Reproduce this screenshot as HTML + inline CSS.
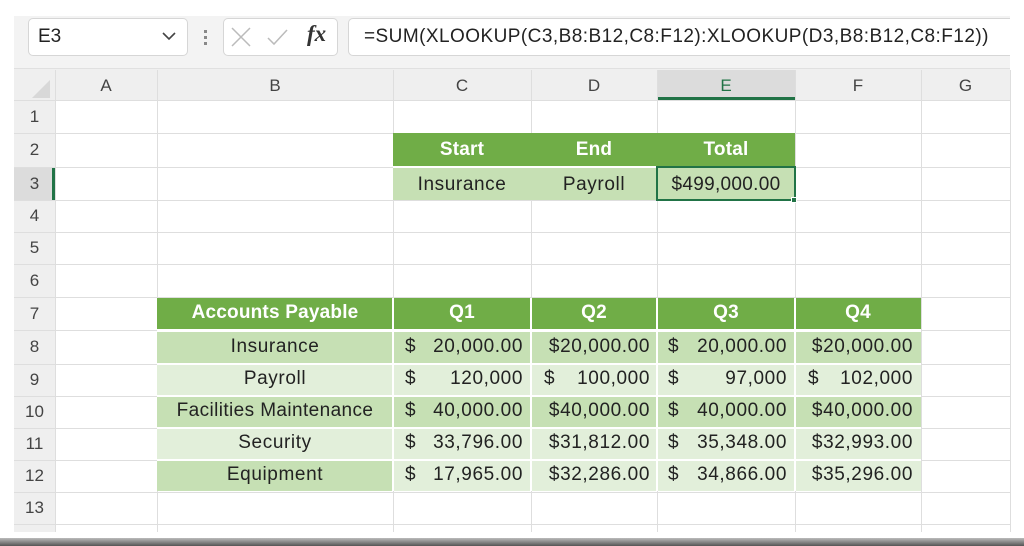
<!DOCTYPE html>
<html><head><meta charset="utf-8"><style>
*{margin:0;padding:0;box-sizing:border-box}
body{width:1024px;height:546px;background:#fff;position:relative;overflow:hidden;font-family:"Liberation Sans",sans-serif}
.a{position:absolute}
.panel{left:14px;top:16px;width:996px;height:516px;background:#f3f3f3}
.box{background:#fff;border:1px solid #d6d6d6;border-radius:5px;height:38px;top:18px}
.hl{position:absolute;background:#dedede}
.ch{top:72px;height:28px;font-size:17px;color:#444;text-align:center;line-height:28px}
.rh{left:14px;width:41px;font-size:17px;color:#444;text-align:center}
.c{position:absolute;font-size:19px;letter-spacing:0.6px;color:#222;text-align:center;white-space:pre}
.g{background:#70ad47;color:#fff;font-weight:bold;letter-spacing:0.2px}
.d{background:#c6e0b4}
.l{background:#e2efda}
.w{position:absolute;background:#fff}
.n{position:absolute;font-size:19px;letter-spacing:0.6px;color:#222;white-space:pre}
</style></head><body>
<div class="a panel"></div>
<div class="a box" style="left:28px;width:160px"></div>
<div class="a" style="left:38px;top:26px;font-size:19px;color:#222">E3</div>
<svg class="a" style="left:162px;top:31px" width="14" height="10"><path d="M1 2 L7 8 L13 2" stroke="#444" stroke-width="1.6" fill="none"/></svg>
<div class="a" style="left:204px;top:30px;width:3px;height:3px;background:#888;box-shadow:0 6px #888,0 12px #888"></div>
<div class="a box" style="left:223px;width:115px"></div>
<svg class="a" style="left:230px;top:26px" width="70" height="24"><path d="M2 2 L20 20 M20 2 L2 20" stroke="#bbb" stroke-width="1.5"/><path d="M38 12 L44 18 L57 4" stroke="#bbb" stroke-width="1.5" fill="none"/></svg>
<div class="a" style="left:307px;top:21px;font-family:'Liberation Serif',serif;font-style:italic;font-weight:bold;font-size:23px;color:#333">fx</div>
<div class="a box" style="left:348px;width:662px;border-right:none;border-radius:5px 0 0 5px"></div>
<div class="a" style="left:364px;top:26px;font-size:19px;color:#222;letter-spacing:0.45px">=SUM(XLOOKUP(C3,B8:B12,C8:F12):XLOOKUP(D3,B8:B12,C8:F12))</div>
<div class="a" style="left:14px;top:68px;width:996px;height:32px;background:#efefef;border-top:1px solid #e0e0e0"></div>
<div class="a" style="left:14px;top:100px;width:41px;height:432px;background:#efefef"></div>
<div class="a" style="left:55px;top:100px;width:955px;height:432px;background:#fff"></div>
<svg class="a" style="left:32px;top:80px" width="18" height="18"><path d="M18 0 L18 18 L0 18 Z" fill="#d8d8d8"/></svg>
<div class="a" style="left:657px;top:70px;width:138px;height:30px;background:#dcdcdc;border-bottom:3px solid #217346"></div>
<div class="a" style="left:14px;top:167px;width:41px;height:33px;background:#dcdcdc;border-right:3px solid #217346"></div>
<div class="a ch" style="left:55px;width:102px">A</div>
<div class="a ch" style="left:157px;width:236px">B</div>
<div class="a ch" style="left:393px;width:138px">C</div>
<div class="a ch" style="left:531px;width:126px">D</div>
<div class="a ch" style="left:657px;width:138px;color:#217346">E</div>
<div class="a ch" style="left:795px;width:126px">F</div>
<div class="a ch" style="left:921px;width:89px">G</div>
<div id="grid"></div>
<script>
var rows=[100,133,167,200,232,264,297,330,364,396,428,460,492,524];
var cols=[55,157,393,531,657,795,921,1010];
var h='';
for(var i=0;i<rows.length;i++){h+='<div class="hl" style="left:14px;top:'+rows[i]+'px;width:996px;height:1px"></div>';}
for(var j=0;j<cols.length;j++){h+='<div class="hl" style="left:'+cols[j]+'px;top:70px;width:1px;height:462px"></div>';}
for(var i=0;i<13;i++){h+='<div class="a rh" style="top:'+rows[i]+'px;height:'+(rows[i+1]-rows[i])+'px;line-height:'+(rows[i+1]-rows[i])+'px">'+(i+1)+'</div>';}
document.getElementById('grid').innerHTML=h;
</script>
<div class="c g" style="left:393px;top:133px;width:402px;height:33px"></div>
<div class="c d" style="left:393px;top:168px;width:402px;height:32px"></div>
<div class="w" style="left:393px;top:166px;width:402px;height:2px"></div>
<div class="c g" style="left:393px;top:139px;width:138px;background:none">Start</div>
<div class="c g" style="left:531px;top:139px;width:126px;background:none">End</div>
<div class="c g" style="left:657px;top:139px;width:138px;background:none">Total</div>
<div class="c" style="left:393px;top:174px;width:138px">Insurance</div>
<div class="c" style="left:531px;top:174px;width:126px">Payroll</div>
<div class="a" style="left:656px;top:166px;width:140px;height:35px;border:2px solid #217346"></div>
<div class="a" style="left:791px;top:197px;width:6px;height:6px;background:#217346;border:1px solid #fff"></div>
<div class="c" style="left:657px;top:174px;width:138px;letter-spacing:0.3px">$499,000.00</div>

<div class="c g" style="left:157px;top:298px;width:764px;height:31px"></div>
<div class="c d" style="left:157px;top:332px;width:764px;height:31px"></div>
<div class="c l" style="left:157px;top:365px;width:764px;height:30px"></div>
<div class="c d" style="left:157px;top:397px;width:764px;height:30px"></div>
<div class="c l" style="left:157px;top:429px;width:764px;height:30px"></div>
<div class="c l" style="left:157px;top:461px;width:764px;height:30px"></div>
<div class="c d" style="left:157px;top:461px;width:236px;height:30px"></div>
<div class="w" style="left:392px;top:298px;width:2px;height:193px"></div>
<div class="w" style="left:530px;top:298px;width:2px;height:193px"></div>
<div class="w" style="left:656px;top:298px;width:2px;height:193px"></div>
<div class="w" style="left:794px;top:298px;width:2px;height:193px"></div>
<div class="w" style="left:157px;top:329px;width:764px;height:3px"></div>
<div class="w" style="left:157px;top:363px;width:764px;height:2px"></div>
<div class="w" style="left:157px;top:395px;width:764px;height:2px"></div>
<div class="w" style="left:157px;top:427px;width:764px;height:2px"></div>
<div class="w" style="left:157px;top:459px;width:764px;height:2px"></div>
<div class="c g" style="left:157px;top:302px;width:236px;background:none">Accounts Payable</div>
<div class="c g" style="left:393px;top:302px;width:138px;background:none">Q1</div>
<div class="c g" style="left:531px;top:302px;width:126px;background:none">Q2</div>
<div class="c g" style="left:657px;top:302px;width:138px;background:none">Q3</div>
<div class="c g" style="left:795px;top:302px;width:126px;background:none">Q4</div>
<div class="c" style="left:157px;top:336px;width:236px">Insurance</div>
<div class="c" style="left:157px;top:368px;width:236px">Payroll</div>
<div class="c" style="left:157px;top:400px;width:236px;letter-spacing:0.4px">Facilities Maintenance</div>
<div class="c" style="left:157px;top:432px;width:236px">Security</div>
<div class="c" style="left:157px;top:464px;width:236px">Equipment</div>

<div class="n" style="left:405px;top:336px">$</div><div class="n" style="left:420px;top:336px;width:103px;text-align:right">20,000.00</div>
<div class="n" style="left:405px;top:368px">$</div><div class="n" style="left:420px;top:368px;width:103px;text-align:right">120,000</div>
<div class="n" style="left:405px;top:400px">$</div><div class="n" style="left:420px;top:400px;width:103px;text-align:right">40,000.00</div>
<div class="n" style="left:405px;top:432px">$</div><div class="n" style="left:420px;top:432px;width:103px;text-align:right">33,796.00</div>
<div class="n" style="left:405px;top:464px">$</div><div class="n" style="left:420px;top:464px;width:103px;text-align:right">17,965.00</div>
<div class="n" style="left:535px;top:336px;width:115px;text-align:right">$20,000.00</div>
<div class="n" style="left:544px;top:368px">$</div><div class="n" style="left:560px;top:368px;width:90px;text-align:right">100,000</div>
<div class="n" style="left:535px;top:400px;width:115px;text-align:right">$40,000.00</div>
<div class="n" style="left:535px;top:432px;width:115px;text-align:right">$31,812.00</div>
<div class="n" style="left:535px;top:464px;width:115px;text-align:right">$32,286.00</div>
<div class="n" style="left:668px;top:336px">$</div><div class="n" style="left:685px;top:336px;width:102px;text-align:right">20,000.00</div>
<div class="n" style="left:668px;top:368px">$</div><div class="n" style="left:685px;top:368px;width:102px;text-align:right">97,000</div>
<div class="n" style="left:668px;top:400px">$</div><div class="n" style="left:685px;top:400px;width:102px;text-align:right">40,000.00</div>
<div class="n" style="left:668px;top:432px">$</div><div class="n" style="left:685px;top:432px;width:102px;text-align:right">35,348.00</div>
<div class="n" style="left:668px;top:464px">$</div><div class="n" style="left:685px;top:464px;width:102px;text-align:right">34,866.00</div>
<div class="n" style="left:798px;top:336px;width:115px;text-align:right">$20,000.00</div>
<div class="n" style="left:808px;top:368px">$</div><div class="n" style="left:830px;top:368px;width:83px;text-align:right">102,000</div>
<div class="n" style="left:798px;top:400px;width:115px;text-align:right">$40,000.00</div>
<div class="n" style="left:798px;top:432px;width:115px;text-align:right">$32,993.00</div>
<div class="n" style="left:798px;top:464px;width:115px;text-align:right">$35,296.00</div>
<div class="a" style="left:0;top:538px;width:1024px;height:8px;background:linear-gradient(#bbb,#555)"></div>
</body></html>
